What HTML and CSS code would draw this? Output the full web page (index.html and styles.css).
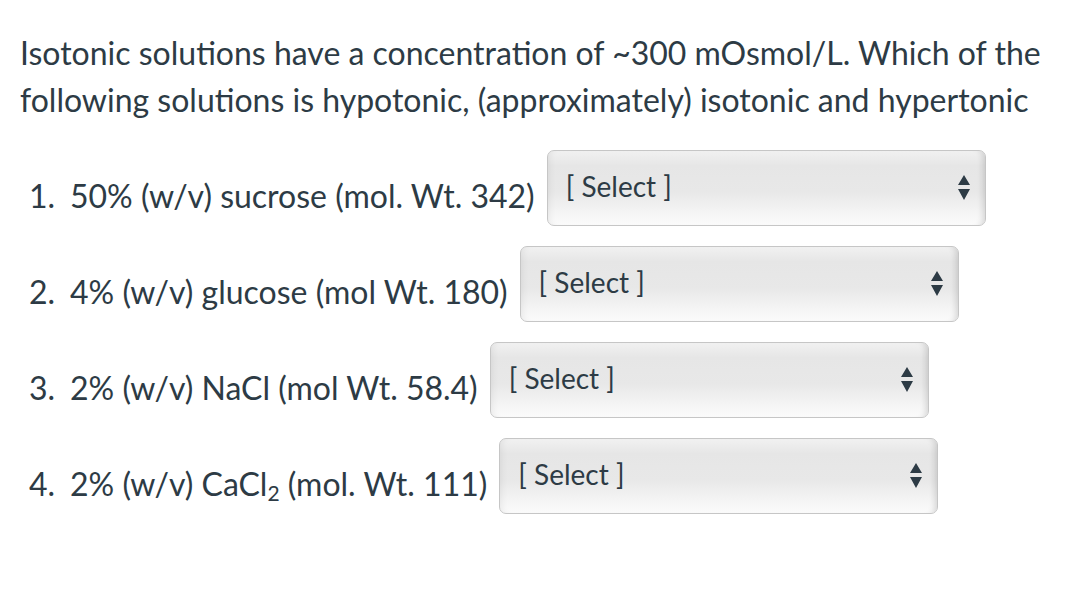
FILE: index.html
```html
<!DOCTYPE html>
<html lang="en">
<head>
<meta charset="utf-8">
<title>Quiz question</title>
<link rel="stylesheet" href="styles.css">
</head>
<body>
<div class="question">
  <p class="prompt">Isotonic solutions have a concentration of ~300 mOsmol/L. Which of the following solutions is hypotonic, (approximately) isotonic and hypertonic</p>
  <div class="rows">
    <div class="row">
      <span class="num">1.</span>
      <span class="label">50% (w/v) sucrose (mol. Wt. 342)</span>
      <div class="select"><span class="select-text">[ Select ]</span><span class="arrows"><svg width="12" height="26" viewBox="0 0 12 26"><path d="M6 0 L12 10 L0 10 Z M0 14 L12 14 L6 25 Z" fill="#2d3b45"/></svg></span></div>
    </div>
    <div class="row">
      <span class="num">2.</span>
      <span class="label">4% (w/v) glucose (mol Wt. 180)</span>
      <div class="select"><span class="select-text">[ Select ]</span><span class="arrows"><svg width="12" height="26" viewBox="0 0 12 26"><path d="M6 0 L12 10 L0 10 Z M0 14 L12 14 L6 25 Z" fill="#2d3b45"/></svg></span></div>
    </div>
    <div class="row">
      <span class="num">3.</span>
      <span class="label">2% (w/v) NaCl (mol Wt. 58.4)</span>
      <div class="select"><span class="select-text">[ Select ]</span><span class="arrows"><svg width="12" height="26" viewBox="0 0 12 26"><path d="M6 0 L12 10 L0 10 Z M0 14 L12 14 L6 25 Z" fill="#2d3b45"/></svg></span></div>
    </div>
    <div class="row">
      <span class="num">4.</span>
      <span class="label">2% (w/v) CaCl<sub>2</sub> (mol. Wt. 111)</span>
      <div class="select"><span class="select-text">[ Select ]</span><span class="arrows"><svg width="12" height="26" viewBox="0 0 12 26"><path d="M6 0 L12 10 L0 10 Z M0 14 L12 14 L6 25 Z" fill="#2d3b45"/></svg></span></div>
    </div>
  </div>
</div>
</body>
</html>
```
FILE: styles.css
```css
html, body {
  margin: 0;
  padding: 0;
  background: #ffffff;
}
body {
  font-family: Lato, "Noto Sans", sans-serif;
  color: #2d3b45;
}
.question {
  padding: 29px 20px 0 20px;
}
.prompt {
  margin: 0;
  font-size: 32px;
  line-height: 47px;
  width: 1040px;
}
.rows {
  margin-top: 27px;
  display: flex;
  flex-direction: column;
  gap: 20px;
}
.row {
  display: flex;
  align-items: flex-start;
  font-size: 32px;
  line-height: 47px;
  padding-left: 9px;
}
.num {
  width: 41px;
  padding-top: 22px;
  flex: none;
}
.label {
  padding-top: 22px;
  white-space: nowrap;
}
.label sub {
  font-size: 21px;
  line-height: 0;
  vertical-align: -5px;
}
.select {
  margin-left: 12px;
  width: 439px;
  height: 76px;
  box-sizing: border-box;
  border: 1px solid #c6c6c6;
  border-radius: 7px;
  background: linear-gradient(to bottom, #f1f1f1 0%, #e6e6e6 20%, #e8e8e8 55%, #f3f3f3 80%, #fbfbfb 100%);
  box-shadow: inset -7px 0 6px -5px rgba(0, 0, 0, 0.14), inset 7px 0 6px -5px rgba(0, 0, 0, 0.06);
  display: flex;
  align-items: flex-start;
  justify-content: space-between;
  padding: 18px 15px 0 18px;
  flex: none;
}
.select-text {
  font-size: 28px;
  line-height: 35px;
  white-space: nowrap;
}
.arrows {
  display: flex;
  padding-top: 6px;
}
```
